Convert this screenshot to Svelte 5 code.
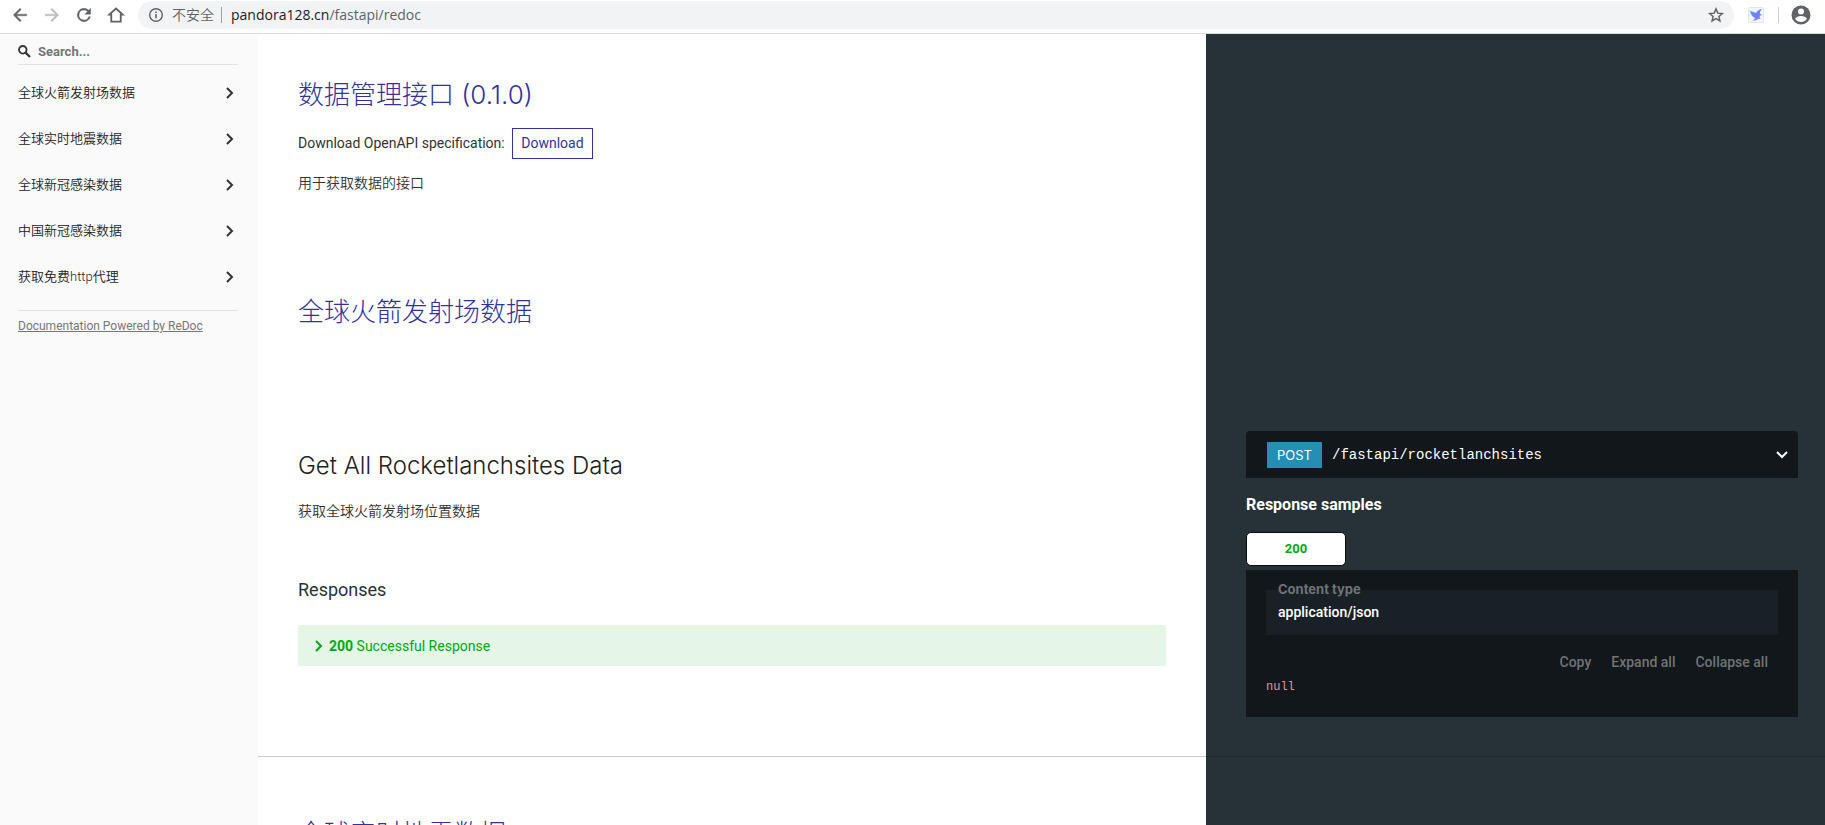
<script>
    const menu = [
        '全球火箭发射场数据',
        '全球实时地震数据',
        '全球新冠感染数据',
        '中国新冠感染数据',
        '获取免费http代理'
    ];
    const actions = ['Copy', 'Expand all', 'Collapse all'];
    let search = '';
</script>

<div class='window'>
    <header class='toolbar'>
        <nav class='nav-buttons'>
            <button aria-label='Back'>
                <svg viewBox='0 0 24 24' width='20' height='20'><path d='M20 11H7.800l5.600-5.600L12 4l-8 8 8 8 1.400-1.400L7.800 13H20z' fill='#5f6368' stroke='#5f6368' stroke-width='0.500'/></svg>
            </button>
            <button aria-label='Forward'>
                <svg viewBox='0 0 24 24' width='20' height='20'><path d='M12 4l-1.400 1.400 5.600 5.600H4v2h12.200l-5.600 5.600L12 20l8-8z' fill='#babcbe' stroke='#babcbe' stroke-width='0.500'/></svg>
            </button>
            <button aria-label='Reload'>
                <svg viewBox='0 0 24 24' width='20' height='20'><path d='M17.650 6.350A8 8 0 1 0 19.730 14h-2.080A6 6 0 1 1 12 6c1.660 0 3.140.69 4.220 1.780L13 11h7V4z' fill='#5f6368' stroke='#5f6368' stroke-width='0.500'/></svg>
            </button>
            <button aria-label='Home'>
                <svg viewBox='0 0 24 24' width='20' height='20'><path d='M12 4.200l8 7.300h-2.300V20H6.300v-8.500H4z' fill='none' stroke='#5f6368' stroke-width='2.200'/></svg>
            </button>
        </nav>
        <div class='address'>
            <svg viewBox='0 0 16 16' width='16' height='16'>
                <circle cx='8' cy='8' r='6.300' fill='none' stroke='#5f6368' stroke-width='1.400'/>
                <path d='M7.200 7h1.600v4.300H7.200zM7.200 4.400h1.600V6H7.200z' fill='#5f6368'/>
            </svg>
            <span class='insecure'>不安全</span>
            <span class='url'>pandora128.cn<span class='path'>/fastapi/redoc</span></span>
            <button class='star' aria-label='Bookmark'>
                <svg viewBox='0 0 24 24' width='18' height='18'><path d='M12 4l2.400 5.500 6 .5-4.500 4 1.300 5.900L12 16.800l-5.200 3.100L8.100 14 3.600 10l6-.5z' fill='none' stroke='#5f6368' stroke-width='2'/></svg>
            </button>
        </div>
        <button class='extension' aria-label='Extension'>
            <svg viewBox='0 0 16 16' width='16' height='16'>
                <defs>
                    <linearGradient id='bird' x1='0' y1='0' x2='1' y2='1'>
                        <stop offset='0' stop-color='#45a8fa'/>
                        <stop offset='0.500' stop-color='#6684fb'/>
                        <stop offset='1' stop-color='#b36bf5'/>
                    </linearGradient>
                </defs>
                <rect x='0.500' y='0.500' width='15' height='15' rx='1.500' fill='#f3f4fe' stroke='#e2e5f5'/>
                <path d='M2 3.800l6.200 2.200C9 4 11 2.600 14 2l-2 2.800-.2 1.700 2.600 1.700-2.600.4c.2 1 .1 1.600-.3 2.200l1.500.9-3 .3C8.600 13 7 13.500 4.800 13.500c1.200-.7 2-1.400 2.400-2.400C4.600 10.300 2.700 7.700 2 3.800z' fill='url(#bird)'/>
            </svg>
        </button>
        <span class='separator'></span>
        <button class='profile' aria-label='Profile'>
            <svg viewBox='0 0 20 20' width='20' height='20'>
                <circle cx='10' cy='10' r='9.500' fill='#5f6368'/>
                <circle cx='10' cy='6.500' r='3' fill='#fff'/>
                <path d='M4.200 14c0-2 3.800-3 5.800-3s5.800 1 5.800 3c-1.200 1.800-3.400 3-5.800 3s-4.600-1.200-5.800-3z' fill='#fff'/>
            </svg>
        </button>
    </header>

    <div class='page'>
        <aside class='sidebar'>
            <label class='search'>
                <svg viewBox='0 0 13 13' width='13' height='13'>
                    <circle cx='4.800' cy='4.800' r='3.800' fill='none' stroke='#333' stroke-width='1.800'/>
                    <path d='M7.600 7.600l4.400 4.400' stroke='#333' stroke-width='2.200'/>
                </svg>
                <input type='text' placeholder='Search...' aria-label='Search' bind:value={search}>
            </label>
            <ul class='menu'>
                {#each menu as item}
                    <li>
                        <a href='#tag'>
                            {item}
                            <svg viewBox='0 0 8 12' width='8' height='12'><path d='M1 1l5 5-5 5' fill='none' stroke='#333' stroke-width='2'/></svg>
                        </a>
                    </li>
                {/each}
            </ul>
            <div class='credit'><a href='#redoc'>Documentation Powered by ReDoc</a></div>
        </aside>

        <main class='content'>
            <section class='row info'>
                <div class='middle'>
                    <h1>数据管理接口 (0.1.0)</h1>
                    <p class='spec'>Download OpenAPI specification: <a class='download' href='#download'>Download</a></p>
                    <p>用于获取数据的接口</p>
                </div>
                <div class='right'></div>
            </section>

            <section class='row tag'>
                <div class='middle'>
                    <h1>全球火箭发射场数据</h1>
                </div>
                <div class='right'></div>
            </section>

            <section class='row operation'>
                <div class='middle'>
                    <h2>Get All Rocketlanchsites Data</h2>
                    <p>获取全球火箭发射场位置数据</p>
                    <h3>Responses</h3>
                    <button class='response'>
                        <svg viewBox='0 0 8 12' width='8' height='12'><path d='M1 1l5 5-5 5' fill='none' stroke='#00aa13' stroke-width='2'/></svg>
                        <span><strong>200</strong> Successful Response</span>
                    </button>
                </div>
                <div class='right'>
                    <button class='endpoint'>
                        <span class='verb'>POST</span>
                        <span class='route'>/fastapi/rocketlanchsites</span>
                        <svg viewBox='0 0 12 8' width='12' height='8'><path d='M1 1l5 5 5-5' fill='none' stroke='#fff' stroke-width='2'/></svg>
                    </button>
                    <h4>Response samples</h4>
                    <button class='tab'>200</button>
                    <div class='sample'>
                        <div class='mime'>
                            <span class='mime-label'>Content type</span>
                            <span class='mime-value'>application/json</span>
                        </div>
                        <div class='actions'>
                            {#each actions as action}
                                <button>{action}</button>
                            {/each}
                        </div>
                        <code>null</code>
                    </div>
                </div>
            </section>

            <section class='row tag'>
                <div class='middle'>
                    <h1>全球实时地震数据</h1>
                </div>
                <div class='right'></div>
            </section>
        </main>
    </div>
</div>

<style>
    :global(body) {
        margin: 0;
    }

    .window {
        height: 100vh;
        display: flex;
        flex-direction: column;
        overflow: hidden;
        font-family: Roboto, 'Noto Sans CJK SC', sans-serif;
        font-size: 14px;
        line-height: 20px;
        color: #333;
        background: #fff;
    }

    button {
        border: 0;
        padding: 0;
        background: none;
        font: inherit;
        color: inherit;
        cursor: pointer;
    }

    svg {
        display: block;
        flex: none;
    }

    h1, h2, h3, h4, p {
        margin: 0;
        font-weight: 400;
    }

    /* browser toolbar */
    .toolbar {
        display: flex;
        align-items: center;
        flex: none;
        height: 30px;
        padding: 0 14px 3px 10px;
        border-bottom: 1px solid #d9dadc;
    }

    .nav-buttons {
        display: flex;
        gap: 12px;
        margin-right: 12px;
    }

    .address {
        flex: 1;
        display: flex;
        align-items: center;
        height: 28px;
        padding: 0 9px 0 10px;
        border-radius: 14px;
        background: #f1f3f4;
        font-family: 'Open Sans', 'Noto Sans CJK SC', sans-serif;
    }

    .insecure {
        margin-left: 8px;
        padding-right: 7px;
        line-height: 16px;
        border-right: 1px solid #9aa0a6;
        color: #5f6368;
        font-weight: 350;
    }

    .url {
        flex: 1;
        margin-left: 9px;
        color: #202124;
    }

    .path {
        color: #5f6368;
    }

    .extension {
        margin-left: 14px;
    }

    .separator {
        width: 1px;
        height: 16px;
        margin: 0 12px 0 14px;
        background: #ccc;
    }

    .page {
        flex: 1;
        min-height: 0;
        display: flex;
    }

    /* left menu */
    .sidebar {
        width: 258px;
        flex: none;
        box-sizing: border-box;
        padding: 4px 20px 0 18px;
        background: #fafafa;
    }

    .search {
        display: flex;
        align-items: center;
        gap: 7px;
        height: 26px;
        border-bottom: 1px solid #e1e1e1;
    }

    .search input {
        flex: 1;
        min-width: 0;
        border: 0;
        padding: 0;
        outline: none;
        background: none;
        font: bold 13px Roboto, sans-serif;
        color: #333;
    }

    .search input::placeholder {
        color: #757575;
    }

    .menu {
        list-style: none;
        margin: 5px 0 10px;
        padding: 0;
    }

    .menu a {
        display: flex;
        align-items: center;
        justify-content: space-between;
        height: 46px;
        padding-right: 4px;
        font-size: 13px;
        font-weight: 350;
        color: #222;
        text-decoration: none;
    }

    .credit {
        padding-top: 5px;
        border-top: 1px solid #e1e1e1;
        font-size: 12px;
    }

    .credit a {
        color: #777;
    }

    /* documentation */
    .content {
        flex: 1;
        min-width: 0;
        overflow: hidden;
    }

    .row {
        position: relative;
        display: grid;
        grid-template-columns: 948fr 619fr;
    }

    .middle {
        padding: 56px 40px 0;
    }

    .right {
        padding: 40px 27px 0 40px;
        background: #263238;
    }

    .info {
        min-height: 201px;
    }

    .info .middle {
        padding-top: 40px;
    }

    .tag {
        min-height: 156px;
    }

    .operation {
        min-height: 366px;
    }

    .operation::after {
        content: '';
        position: absolute;
        left: 0;
        right: 0;
        bottom: 0;
        border-bottom: 1px solid rgba(0, 0, 0, 0.2);
    }

    h1, h2 {
        font-family: Inter, 'Noto Sans CJK SC', sans-serif;
        font-weight: 300;
    }

    h1 {
        font-size: 26px;
        line-height: 42px;
        color: #32329f;
    }

    h2 {
        font-size: 24px;
        line-height: 38px;
        color: #222;
    }

    .middle p {
        font-weight: 350;
    }

    .middle .spec {
        margin: 12px 0 14px;
        font-weight: 400;
    }

    .download {
        display: inline-block;
        margin-left: 4px;
        padding: 5px 8px;
        line-height: 19px;
        border: 1px solid #32329f;
        color: #32329f;
        text-decoration: none;
    }

    .operation p {
        margin: 16px 0 56px;
    }

    h3 {
        margin-bottom: 22px;
        font-size: 18px;
        line-height: 26px;
        color: #263238;
    }

    .response {
        display: flex;
        align-items: center;
        gap: 6px;
        width: 100%;
        height: 41px;
        padding: 0 17px;
        border-radius: 2px;
        background: #e5f5e6;
        color: #00aa13;
        text-align: left;
    }

    .endpoint {
        display: flex;
        align-items: center;
        width: 100%;
        height: 47px;
        padding: 0 10px 0 21px;
        border-radius: 4px 4px 0 0;
        background: #11171a;
        color: #fff;
    }

    .verb {
        padding: 0 10px;
        line-height: 26px;
        font-family: Inter, sans-serif;
        font-size: 13px;
        background: #248fb2;
    }

    .route {
        flex: 1;
        margin-left: 10px;
        font-family: 'Liberation Mono', monospace;
        text-align: left;
    }

    h4 {
        margin: 17px 0 17px;
        font-size: 16px;
        font-weight: 700;
        color: #fff;
    }

    .tab {
        display: block;
        width: 100px;
        height: 34px;
        margin-bottom: 4px;
        border: 1px solid #07090b;
        border-radius: 5px;
        background: #fff;
        font-size: 13px;
        font-weight: 700;
        color: #00aa13;
    }

    .sample {
        padding: 20px;
        background: #11171a;
    }

    .mime {
        position: relative;
        padding: 12px 12px 13px;
        background: #192126;
        color: #fff;
    }

    .mime-label {
        position: absolute;
        top: -11px;
        left: 12px;
        font-family: Inter, sans-serif;
        font-size: 13px;
        font-weight: 700;
        color: #6f7375;
    }

    .mime-value {
        font-weight: 500;
    }

    .actions {
        display: flex;
        justify-content: flex-end;
        gap: 20px;
        padding: 17px 10px 5px 0;
        color: #707476;
    }

    .actions button {
        font-weight: 500;
    }

    code {
        display: block;
        font-family: 'Liberation Mono', monospace;
        font-size: 12px;
        color: #e2949b;
    }
</style>
